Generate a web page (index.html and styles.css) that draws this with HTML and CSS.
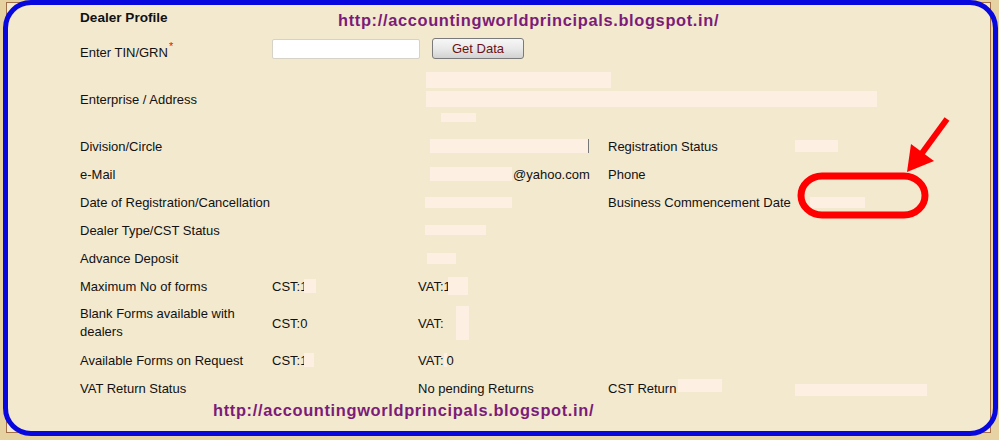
FILE: index.html
```html
<!DOCTYPE html>
<html>
<head>
<meta charset="utf-8">
<title>Dealer Profile</title>
<link rel="stylesheet" href="styles.css">
</head>
<body>
<div class="page">
  <div class="panel">
    <div class="head">
      <span class="title">Dealer Profile</span>
      <span class="url url-top">http://accountingworldprincipals.blogspot.in/</span>
    </div>
    <div class="tin-row">
      <label class="tin-label">Enter TIN/GRN<sup class="req">*</sup></label>
      <input class="tin-input" type="text">
      <button class="btn">Get Data</button>
    </div>
    <div class="row row-ent">
      <div class="c1">Enterprise / Address</div>
      <div class="addr">
        <span class="rd rd-a1"></span>
        <span class="rd rd-a2"></span>
        <span class="rd rd-a3"></span>
      </div>
    </div>
    <div class="row">
      <div class="c1">Division/Circle</div>
      <div class="c2"></div>
      <div class="c3"><span class="rd rd-div"></span></div>
      <div class="c4">Registration Status</div>
      <div class="c5"><span class="rd rd-reg"></span></div>
    </div>
    <div class="row">
      <div class="c1">e-Mail</div>
      <div class="c2"></div>
      <div class="c3"><span class="rd rd-mail"></span>@yahoo.com</div>
      <div class="c4">Phone</div>
      <div class="c5"></div>
    </div>
    <div class="row">
      <div class="c1">Date of Registration/Cancellation</div>
      <div class="c2"></div>
      <div class="c3"><span class="rd rd-date"></span></div>
      <div class="c4">Business Commencement Date</div>
      <div class="c5"><span class="rd rd-bcd"></span></div>
    </div>
    <div class="row">
      <div class="c1">Dealer Type/CST Status</div>
      <div class="c2"></div>
      <div class="c3"><span class="rd rd-type"></span></div>
      <div class="c4"></div>
      <div class="c5"></div>
    </div>
    <div class="row">
      <div class="c1">Advance Deposit</div>
      <div class="c2"></div>
      <div class="c3"><span class="rd rd-adv"></span></div>
      <div class="c4"></div>
      <div class="c5"></div>
    </div>
    <div class="row">
      <div class="c1">Maximum No of forms</div>
      <div class="c2">CST:1<span class="rd rd-cst1"></span></div>
      <div class="c3">VAT:1<span class="rd rd-vat1"></span></div>
      <div class="c4"></div>
      <div class="c5"></div>
    </div>
    <div class="row row-blank">
      <div class="c1 two">Blank Forms available with<br>dealers</div>
      <div class="c2">CST:0</div>
      <div class="c3">VAT:<span class="rd rd-vat2"></span></div>
      <div class="c4"></div>
      <div class="c5"></div>
    </div>
    <div class="row">
      <div class="c1">Available Forms on Request</div>
      <div class="c2">CST:1<span class="rd rd-cst3"></span></div>
      <div class="c3">VAT:<span class="rd rd-vat3"></span>0</div>
      <div class="c4"></div>
      <div class="c5"></div>
    </div>
    <div class="row">
      <div class="c1">VAT Return Status</div>
      <div class="c2"></div>
      <div class="c3">No pending Returns</div>
      <div class="c4">CST Return<span class="rd rd-cstr"></span></div>
      <div class="c5"><span class="rd rd-cstv"></span></div>
    </div>
    <div class="foot">
      <span class="url url-bottom">http://accountingworldprincipals.blogspot.in/</span>
    </div>
  </div>
  <div class="frame"></div>
  <svg class="mark" width="999" height="440" viewBox="0 0 999 440">
    <rect x="801" y="176" width="124" height="39" rx="21" ry="19.5" fill="none" stroke="#ff0000" stroke-width="7"/>
    <line x1="947" y1="119" x2="917" y2="160" stroke="#ff0000" stroke-width="6" stroke-linecap="butt"/>
    <polygon points="907,172 911,144 934,161" fill="#ff0000"/>
  </svg>
</div>
</body>
</html>
```

FILE: styles.css
```css
html, body {
  margin: 0;
  padding: 0;
}
body {
  background: #e8d4a6;
  font-family: "Liberation Sans", Arial, sans-serif;
  font-size: 13px;
  color: #111;
}
.page {
  position: relative;
  width: 999px;
  height: 440px;
  overflow: hidden;
  background: linear-gradient(90deg, #e6d1a0 0%, #ead8ad 50%, #e6d2a3 100%);
}
.panel {
  box-sizing: border-box;
  margin: 2px 0 0 6px;
  width: 985px;
  height: 431px;
  border: 1px solid #a06f48;
  background: #f3e9cf;
  padding-left: 73px;
  display: flex;
  flex-direction: column;
}
.head {
  height: 31px;
  display: flex;
  align-items: flex-start;
}
.title {
  font-weight: bold;
  font-size: 13.6px;
  line-height: 16px;
  margin-top: 7px;
  width: 258px;
  color: #111;
}
.url {
  font-weight: bold;
  font-size: 16.4px;
  letter-spacing: 0.66px;
  line-height: 19px;
  color: #7b1c78;
  white-space: nowrap;
}
.url-top {
  margin-top: 8px;
}
.tin-row {
  height: 32px;
  display: flex;
  align-items: flex-start;
}
.tin-label {
  width: 192px;
  line-height: 15px;
  margin-top: 11px;
  position: relative;
}
.req {
  color: #e01010;
  font-size: 11px;
  line-height: 0;
  position: relative;
  top: -2px;
  margin-left: 1px;
}
.tin-input {
  box-sizing: border-box;
  width: 148px;
  height: 20px;
  margin: 5px 0 0 0;
  padding: 0;
  border: 1px solid #d6d2c8;
  border-radius: 2px;
  background: #fff;
}
.btn {
  box-sizing: border-box;
  width: 92px;
  height: 21px;
  margin: 4px 0 0 12px;
  padding: 0;
  border: 1px solid #7a7a7a;
  border-radius: 3px;
  background: linear-gradient(#f7f7f7 0%, #e9e9e9 50%, #d2d2d2 100%);
  font-family: "Liberation Sans", Arial, sans-serif;
  font-size: 13px;
  color: #6e1010;
}
.row {
  display: grid;
  grid-template-columns: 192px 146px 190px 187px 1fr;
  align-items: center;
  height: 28px;
  line-height: 15px;
  white-space: nowrap;
}
.row-ent {
  height: 66px;
}
.row-blank {
  height: 46px;
}
.c1.two {
  line-height: 18.5px;
  white-space: normal;
}
.c2, .c3, .c4, .c5 {
  display: flex;
  align-items: center;
}
.addr {
  grid-column: 3 / 6;
  align-self: start;
  margin-top: 6px;
  display: flex;
  flex-direction: column;
  align-items: flex-start;
}
.rd {
  display: inline-block;
  background: #fdefe1;
  flex: none;
}
.rd-a1 { width: 185px; height: 16px; margin-left: 8px; }
.rd-a2 { width: 451px; height: 16px; margin-left: 8px; margin-top: 3px; }
.rd-a3 { width: 35px; height: 9px; margin-left: 23px; margin-top: 6px; }
.rd-div { width: 158px; height: 14px; margin-left: 12px; border-right: 1px solid #777; }
.rd-reg { width: 43px; height: 12px; }
.rd-mail { width: 82px; height: 14px; margin-left: 12px; margin-right: 1px; }
.rd-date { width: 87px; height: 11px; margin-left: 7px; }
.rd-bcd { width: 55px; height: 11px; margin-left: 15px; }
.rd-type { width: 61px; height: 10px; margin-left: 7px; }
.rd-adv { width: 29px; height: 11px; margin-left: 9px; }
.rd-cst1 { width: 12px; height: 14px; margin-left: -3px; }
.rd-vat1 { width: 20px; height: 18px; margin-left: -3px; }
.rd-vat2 { width: 13px; height: 34px; margin-left: 12px; }
.rd-cst3 { width: 10px; height: 14px; margin-left: -3px; }
.rd-vat3 { width: 3px; height: 14px; }
.rd-cstr { width: 44px; height: 13px; margin-left: 2px; margin-top: -5px; }
.rd-cstv { width: 132px; height: 12px; margin-top: 3px; }
.foot {
  height: 18px;
  padding-left: 133px;
  display: flex;
  align-items: flex-start;
}
.url-bottom {
  margin-top: -1px;
}
.frame {
  position: absolute;
  left: 3px;
  top: 0;
  width: 995px;
  height: 436px;
  box-sizing: border-box;
  border: 5px solid #0808de;
  border-radius: 28px;
  pointer-events: none;
}
.mark {
  position: absolute;
  left: 0;
  top: 0;
  pointer-events: none;
}
```
